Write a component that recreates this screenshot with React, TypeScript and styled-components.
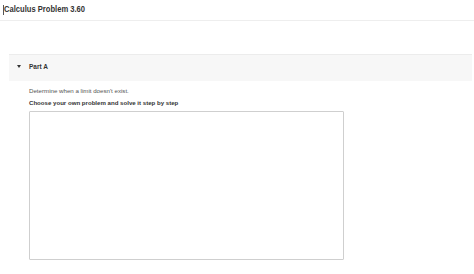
import React, { ChangeEvent, useCallback, useState } from 'react';
import { createGlobalStyle, styled } from 'styled-components';

const GlobalStyle = createGlobalStyle`
  html, body {
    margin: 0;
    padding: 0;
    background: #fff;
  }

  body {
    font-family: 'Liberation Sans', Arial, sans-serif;
    color: #333;
  }
`;

const App = () => {
  const [isOpen, setIsOpen] = useState(true);
  const [answer, setAnswer] = useState('');

  const onChangeAnswer = useCallback((e: ChangeEvent<HTMLTextAreaElement>) => {
    setAnswer(e.target.value);
  }, []);

  return (
    <>
      <GlobalStyle />
      <Page>
        <Header>
          <Caret />
          <h1>Calculus Problem 3.60</h1>
        </Header>
        <Section>
          <PartHeader onClick={() => setIsOpen(!isOpen)}>
            <Arrow open={isOpen} />
            <span>Part A</span>
          </PartHeader>
          {isOpen && (
            <PartBody>
              <Prompt>Determine when a limit doesn't exist.</Prompt>
              <Instruction>Choose your own problem and solve it step by step</Instruction>
              <AnswerBox value={answer} onChange={onChangeAnswer} />
            </PartBody>
          )}
        </Section>
      </Page>
    </>
  );
};

export default App;

const Page = styled.div`
  display: flex;
  flex-direction: column;
  width: 474px;
  height: 274px;
`;

const Header = styled.div`
  display: flex;
  align-items: center;
  height: 21px;
  padding-left: 3px;
  padding-bottom: 1px;
  box-sizing: border-box;
  border-bottom: 1px solid #eeeeee;

  > h1 {
    margin: 0;
    font-size: 7.6px;
    font-weight: 700;
    color: #333;
    transform: scaleY(1.12);
  }
`;

const Caret = styled.div`
  width: 1px;
  height: 10px;
  background: #555;
`;

const Section = styled.div`
  display: flex;
  flex-direction: column;
  margin: 33px 2px 0 9px;
`;

const PartHeader = styled.div`
  display: flex;
  align-items: center;
  height: 27px;
  box-sizing: border-box;
  padding: 0 0 3px 8px;
  background: #f7f7f7;
  border-top: 1px solid #ececec;
  cursor: pointer;

  > span {
    margin-left: 8px;
    font-size: 6.5px;
    font-weight: 700;
    color: #333;
  }
`;

const Arrow = styled.div<{ open: boolean }>`
  width: 0;
  height: 0;
  border-left: 2.5px solid transparent;
  border-right: 2.5px solid transparent;
  border-top: 3px solid #333;
  transform: ${({ open }) => (open ? 'none' : 'rotate(-90deg)')};
`;

const PartBody = styled.div`
  display: flex;
  flex-direction: column;
  padding: 6px 0 0 20px;
`;

const Prompt = styled.p`
  margin: 0;
  font-size: 6.15px;
  color: #555;
`;

const Instruction = styled.p`
  margin: 5px 0 0;
  font-size: 6.1px;
  font-weight: 700;
  color: #333;
`;

const AnswerBox = styled.textarea`
  box-sizing: border-box;
  width: 315px;
  height: 149px;
  margin-top: 5px;
  padding: 4px;
  border: 1px solid #cfcfcf;
  border-radius: 1px;
  resize: none;
  outline: none;
  background: #fff;
`;
